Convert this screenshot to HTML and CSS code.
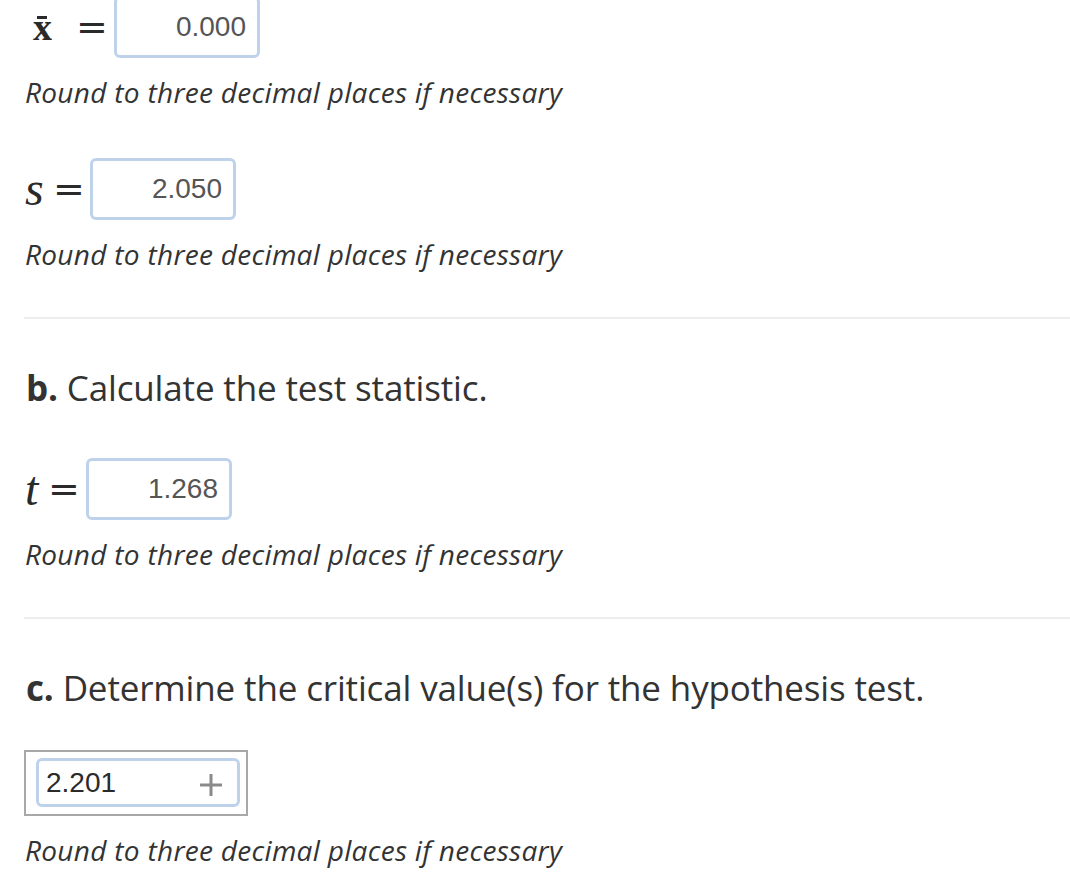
FILE: index.html
```html
<!DOCTYPE html>
<html lang="en">
<head>
<meta charset="utf-8">
<title>Hypothesis test</title>
<link rel="stylesheet" href="styles.css">
</head>
<body>
<div class="page">
  <div class="row row-first">
    <span class="sym sym-xbar">x</span><span class="eq eq-xbar">=</span>
    <div class="num-input in-xbar">0.000</div>
  </div>
  <p class="hint">Round to three decimal places if necessary</p>

  <div class="row row-s">
    <span class="sym sym-s">s</span><span class="eq eq-s">=</span>
    <div class="num-input in-s">2.050</div>
  </div>
  <p class="hint">Round to three decimal places if necessary</p>

  <hr class="sep">

  <h2 class="part"><b>b.</b> Calculate the test statistic.</h2>

  <div class="row row-t">
    <span class="sym sym-t">t</span><span class="eq eq-t">=</span>
    <div class="num-input in-t">1.268</div>
  </div>
  <p class="hint">Round to three decimal places if necessary</p>

  <hr class="sep">

  <h2 class="part"><b>c.</b> Determine the critical value(s) for the hypothesis test.</h2>

  <div class="multi-box">
    <div class="multi-input">
      <span class="multi-value">2.201</span>
      <span class="plus" aria-label="add">
        <svg width="22" height="24" viewBox="0 0 22 24"><path d="M11 1v22M0 12h22" stroke="#8a8a8a" stroke-width="3" fill="none"/></svg>
      </span>
    </div>
  </div>
  <p class="hint">Round to three decimal places if necessary</p>
</div>
</body>
</html>
```

FILE: styles.css
```css
html, body {
  margin: 0;
  padding: 0;
  background: #ffffff;
}

.page {
  padding-left: 24px;
  margin-top: -4px;
  font-family: "Open Sans", "Liberation Sans", sans-serif;
  color: #333333;
}

.row {
  display: flex;
  align-items: center;
  height: 62px;
}

.sym {
  font-family: "Liberation Serif", "DejaVu Serif", serif;
  color: #2a2a2a;
  display: inline-block;
  line-height: 1;
}

.sym-xbar {
  position: relative;
  font-weight: bold;
  font-size: 38px;
  width: 19px;
  margin-left: 9px;
}

.sym-xbar::before {
  content: "";
  position: absolute;
  left: 4px;
  width: 10px;
  top: 8px;
  height: 3px;
  background: #2a2a2a;
}

.sym-s,
.sym-t {
  font-style: italic;
  font-size: 48px;
  margin-left: 1px;
}

.sym-s { width: 17px; }
.sym-t { width: 13px; }

.eq {
  font-family: "DejaVu Serif", "Liberation Serif", serif;
  font-size: 38px;
  line-height: 1;
  color: #2a2a2a;
  display: inline-block;
  width: 25px;
  text-align: center;
}

.eq-xbar { margin-left: 24px; }
.eq-s { margin-left: 11px; }
.eq-t { margin-left: 10px; }

.num-input {
  box-sizing: border-box;
  width: 146px;
  height: 62px;
  border: 3px solid #bfd2ec;
  border-radius: 6px;
  font-family: "Liberation Sans", Arial, sans-serif;
  font-size: 28px;
  color: #555555;
  text-align: right;
  padding-right: 11px;
  line-height: 56px;
}

.in-xbar { margin-left: 13px; }
.in-s { margin-left: 12px; }
.in-t { margin-left: 13px; }

.hint {
  font-style: italic;
  font-size: 28px;
  letter-spacing: 0.3px;
  line-height: 36px;
  margin: 16px 0 0 1px;
  color: #333333;
}

.row-s { margin-top: 48px; }
.row-t { margin-top: 45px; }

.sep {
  border: 0;
  height: 2px;
  background: #ececec;
  margin: 45px 0 0 0;
}

.part {
  font-size: 35px;
  letter-spacing: -0.15px;
  font-weight: normal;
  line-height: 50px;
  margin: 44px 0 0 2px;
  color: #333333;
}

.part b {
  font-weight: bold;
}

.multi-box {
  box-sizing: border-box;
  width: 224px;
  height: 66px;
  border: 2px solid #a8a8a8;
  margin-top: 37px;
  padding: 6px 6px 7px 10px;
}

.multi-input {
  box-sizing: border-box;
  height: 100%;
  border: 3px solid #bfd2ec;
  border-radius: 6px;
  display: flex;
  align-items: center;
  justify-content: space-between;
  padding: 0 15px 0 7px;
  font-family: "Liberation Sans", Arial, sans-serif;
  font-size: 28px;
  color: #2a2a2a;
}

.plus {
  display: flex;
  margin-top: 4px;
}

.multi-box + .hint {
  margin-top: 16px;
}
```
